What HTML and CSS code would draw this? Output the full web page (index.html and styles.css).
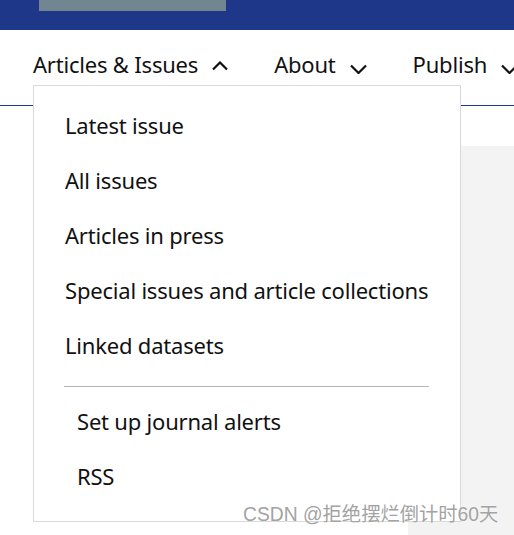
FILE: index.html
```html
<!DOCTYPE html>
<html lang="en">
<head>
<meta charset="utf-8">
<title>Journal navigation</title>
<link rel="stylesheet" href="styles.css">
</head>
<body>
<header class="topbar">
  <div class="logo"></div>
</header>
<nav class="mainnav">
  <div class="nav-item open">
    <span>Articles &amp; Issues</span>
    <svg class="chev up" width="16" height="10" viewBox="0 0 16 10"><path d="M1 8.5 L8 1.5 L15 8.5" fill="none" stroke="#111" stroke-width="2.2"/></svg>
  </div>
  <div class="nav-item">
    <span>About</span>
    <svg class="chev down" width="17" height="10" viewBox="0 0 17 10"><path d="M1 1.5 L8.5 9 L16 1.5" fill="none" stroke="#111" stroke-width="2.2"/></svg>
  </div>
  <div class="nav-item">
    <span>Publish</span>
    <svg class="chev down" width="17" height="10" viewBox="0 0 17 10"><path d="M1 1.5 L8.5 9 L16 1.5" fill="none" stroke="#111" stroke-width="2.2"/></svg>
  </div>
</nav>
<main class="page">
  <div class="content"></div>
  <aside class="sidepanel"></aside>
</main>
<div class="dropdown">
  <ul class="menu">
    <li>Latest issue</li>
    <li>All issues</li>
    <li>Articles in press</li>
    <li>Special issues and article collections</li>
    <li>Linked datasets</li>
  </ul>
  <hr class="sep">
  <ul class="menu secondary">
    <li>Set up journal alerts</li>
    <li>RSS</li>
  </ul>
</div>
<div class="watermark">CSDN @拒绝摆烂倒计时60天</div>
</body>
</html>
```
FILE: styles.css
```css
html, body {
  margin: 0;
  padding: 0;
  background: #fff;
}
body {
  width: 514px;
  height: 535px;
  overflow: hidden;
  position: relative;
  font-family: "Noto Sans", "Open Sans", sans-serif;
  color: #111;
  letter-spacing: -0.2px;
}
.topbar {
  height: 30px;
  background: #1f3788;
}
.logo {
  margin-left: 39px;
  width: 187px;
  height: 11px;
  background: #718690;
}
.mainnav {
  height: 76px;
  box-sizing: border-box;
  padding: 7px 0 0 33px;
  border-bottom: 1px solid #1f3788;
  display: flex;
  gap: 46px;
  white-space: nowrap;
}
.nav-item {
  display: flex;
  align-items: center;
  gap: 14px;
  font-size: 22px;
  line-height: 55px;
  height: 55px;
}
.chev {
  position: relative;
}
.chev.up {
  top: 1px;
}
.chev.down {
  top: 4px;
}
.page {
  display: flex;
  height: 429px;
}
.content {
  flex: 1;
}
.sidepanel {
  width: 106px;
  margin-top: 40px;
  background: #f3f3f3;
}
.dropdown {
  position: absolute;
  left: 33px;
  top: 85px;
  width: 428px;
  height: 437px;
  box-sizing: border-box;
  border: 1px solid #d9d9d9;
  background: #fff;
  padding-top: 12px;
}
.menu {
  list-style: none;
  margin: 0;
  padding: 0 0 0 31px;
}
.menu li {
  font-size: 22px;
  line-height: 55px;
  height: 55px;
  white-space: nowrap;
}
.sep {
  margin: 13px 0 7px 30px;
  width: 365px;
  border: 0;
  border-top: 1px solid #b5b5b5;
  height: 0;
}
.menu.secondary {
  padding-left: 43px;
}
.watermark {
  position: absolute;
  left: 243px;
  top: 502px;
  font-family: "Liberation Sans", "Noto Sans CJK SC", sans-serif;
  font-size: 19.3px;
  line-height: 26px;
  letter-spacing: 0;
  color: #a3a3a3;
  text-shadow: 0 0 1px #fff;
  white-space: nowrap;
}
```
